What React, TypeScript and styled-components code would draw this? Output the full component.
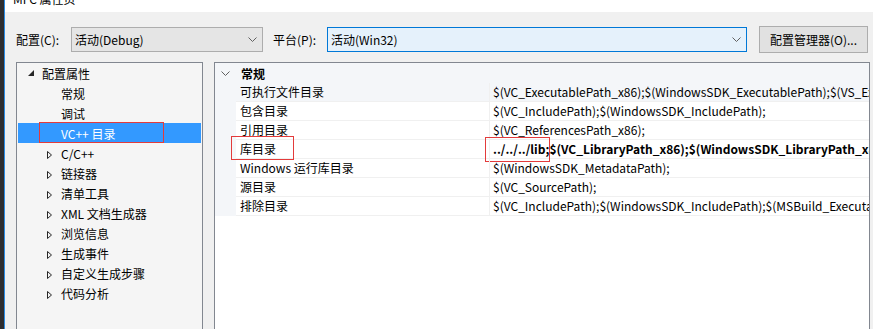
import React from 'react'
import styled, { createGlobalStyle } from 'styled-components'

type TreeItem = {
  label: string
  level: number
  arrow?: 'open' | 'closed'
  selected?: boolean
  marked?: boolean
}

const tree: TreeItem[] = [
  { label: '配置属性', level: 0, arrow: 'open' },
  { label: '常规', level: 1 },
  { label: '调试', level: 1 },
  { label: 'VC++ 目录', level: 1, selected: true, marked: true },
  { label: 'C/C++', level: 1, arrow: 'closed' },
  { label: '链接器', level: 1, arrow: 'closed' },
  { label: '清单工具', level: 1, arrow: 'closed' },
  { label: 'XML 文档生成器', level: 1, arrow: 'closed' },
  { label: '浏览信息', level: 1, arrow: 'closed' },
  { label: '生成事件', level: 1, arrow: 'closed' },
  { label: '自定义生成步骤', level: 1, arrow: 'closed' },
  { label: '代码分析', level: 1, arrow: 'closed' }
]

type Prop = {
  name: string
  value: string
  bold?: boolean
  focused?: boolean
  marked?: boolean
}

const props: Prop[] = [
  {
    name: '可执行文件目录',
    value: '$(VC_ExecutablePath_x86);$(WindowsSDK_ExecutablePath);$(VS_ExecutablePath);$(MSBuild_ExecutablePath);$(SystemRoot)\\SysWow64;$(FxCopDir);$(PATH);',
    focused: true
  },
  { name: '包含目录', value: '$(VC_IncludePath);$(WindowsSDK_IncludePath);' },
  { name: '引用目录', value: '$(VC_ReferencesPath_x86);' },
  {
    name: '库目录',
    value: '../../../lib;$(VC_LibraryPath_x86);$(WindowsSDK_LibraryPath_x86);$(NETFXKitsDir)Lib\\um\\x86',
    bold: true,
    marked: true
  },
  { name: 'Windows 运行库目录', value: '$(WindowsSDK_MetadataPath);' },
  { name: '源目录', value: '$(VC_SourcePath);' },
  {
    name: '排除目录',
    value: '$(VC_IncludePath);$(WindowsSDK_IncludePath);$(MSBuild_ExecutablePath);$(VC_LibraryPath_x86);'
  }
]

const Chevron = () => (
  <svg width="9" height="5" viewBox="0 0 9 5">
    <polyline points="0.5,0.5 4.5,4.5 8.5,0.5" fill="none" stroke="#606060" strokeWidth="1" />
  </svg>
)

const TreeArrow = ({ kind }: { kind?: 'open' | 'closed' }) => (
  <ArrowBox>
    {kind === 'open' && (
      <svg width="15" height="20" viewBox="0 0 15 20">
        <polygon points="7,7 7,13 1,13" fill="#262626" />
      </svg>
    )}
    {kind === 'closed' && (
      <svg width="15" height="20" viewBox="0 0 15 20">
        <polygon points="1.5,8.5 1.5,15.5 5.5,12" fill="none" stroke="#262626" strokeWidth="1" />
      </svg>
    )}
  </ArrowBox>
)

const App = () => {
  return (
    <Screen>
      <GlobalStyle />
      <IdeStrip />
      <Dialog>
        <TitleBar>
          <TitleText>MFC 属性页</TitleText>
        </TitleBar>
        <Body>
          <Toolbar>
            <FieldLabel $width={55}>配置(C):</FieldLabel>
            <Combo $width={192}>
              <span>活动(Debug)</span>
              <Chevron />
            </Combo>
            <FieldLabel $width={54} $gap={10}>
              平台(P):
            </FieldLabel>
            <Combo $width={420} $focused>
              <span>活动(Win32)</span>
              <Chevron />
            </Combo>
            <Button>配置管理器(O)...</Button>
          </Toolbar>
          <Panels>
            <TreePanel>
              {tree.map((item, i) => (
                <TreeRow key={i} $level={item.level} $selected={item.selected}>
                  <TreeArrow kind={item.arrow} />
                  <span>{item.label}</span>
                  {item.marked && <TreeMark />}
                </TreeRow>
              ))}
            </TreePanel>
            <GridPanel>
              <GroupHeader>
                <GroupToggle>
                  <Chevron />
                </GroupToggle>
                <GroupTitle>常规</GroupTitle>
              </GroupHeader>
              {props.map((p, i) => (
                <PropRow key={i} $focused={p.focused}>
                  <Gutter />
                  <NameCell>
                    {p.name}
                    {p.marked && <NameMark />}
                  </NameCell>
                  <ValueCell $bold={p.bold}>
                    {p.value}
                    {p.marked && <ValueMark />}
                  </ValueCell>
                </PropRow>
              ))}
            </GridPanel>
          </Panels>
        </Body>
      </Dialog>
    </Screen>
  )
}

const GlobalStyle = createGlobalStyle`
  html, body {
    margin: 0;
    padding: 0;
    overflow: hidden;
  }
  body {
    font-family: "Noto Sans CJK SC", "Microsoft YaHei UI", sans-serif;
    font-size: 12px;
    color: #000;
  }
`

const Screen = styled.div`
  display: flex;
  width: 873px;
  height: 329px;
  overflow: hidden;
`

const IdeStrip = styled.div`
  width: 4px;
  flex: none;
  background: linear-gradient(#2d2d30 0, #2d2d30 100%);
  border-right: 1px solid #2a8ce6;
`

const Dialog = styled.div`
  flex: 1;
  min-width: 0;
  display: flex;
  flex-direction: column;
  background: #f0f0f0;
`

const TitleBar = styled.div`
  height: 12px;
  flex: none;
  background: #fff;
  overflow: hidden;
  padding-left: 8px;
`

const TitleText = styled.div`
  margin-top: -7px;
  line-height: 12px;
  font-size: 12px;
`

const Body = styled.div`
  flex: 1;
  display: flex;
  flex-direction: column;
  padding: 14px 0 0 11px;
  min-height: 0;
`

const Toolbar = styled.div`
  display: flex;
  align-items: center;
  height: 27px;
`

const FieldLabel = styled.span<{ $width: number; $gap?: number }>`
  width: ${p => p.$width}px;
  margin-left: ${p => p.$gap ?? 0}px;
  flex: none;
  line-height: 16px;
  white-space: nowrap;
`

const Combo = styled.div<{ $width: number; $focused?: boolean }>`
  box-sizing: border-box;
  width: ${p => p.$width}px;
  height: 25px;
  flex: none;
  display: flex;
  align-items: center;
  justify-content: space-between;
  padding: 0 5px 0 3px;
  border: 1px solid ${p => (p.$focused ? '#0078d7' : '#adadad')};
  background: ${p => (p.$focused ? '#e5f1fb' : '#e5e5e5')};
  white-space: nowrap;
`

const Button = styled.div`
  box-sizing: border-box;
  width: 109px;
  height: 27px;
  margin-left: 12px;
  flex: none;
  display: flex;
  align-items: center;
  justify-content: center;
  border: 1px solid #adadad;
  background: #e1e1e1;
  white-space: nowrap;
`

const Panels = styled.div`
  display: flex;
  gap: 11px;
  margin-top: 9px;
  height: 290px;
  flex: none;
`

const TreePanel = styled.div`
  box-sizing: border-box;
  width: 187px;
  flex: none;
  border: 1px solid #828790;
  background: #f5f5f5;
  padding-top: 0;
`

const TreeRow = styled.div<{ $level: number; $selected?: boolean }>`
  position: relative;
  display: flex;
  align-items: center;
  height: 20px;
  margin: 0 1px;
  padding-left: ${p => 9 + p.$level * 19}px;
  background: ${p => (p.$selected ? '#3399ff' : 'transparent')};
  color: ${p => (p.$selected ? '#fff' : '#000')};
  white-space: nowrap;
`

const ArrowBox = styled.span`
  width: 15px;
  height: 20px;
  flex: none;
  display: flex;
`

const Mark = styled.div`
  position: absolute;
  box-sizing: border-box;
  border: 1px solid #e33b3b;
  pointer-events: none;
`

const TreeMark = styled(Mark)`
  left: 21px;
  top: -1px;
  width: 125px;
  height: 21px;
`

const NameMark = styled(Mark)`
  left: -5px;
  top: -4px;
  width: 63px;
  height: 24px;
`

const ValueMark = styled(Mark)`
  left: -5px;
  top: -3px;
  width: 65px;
  height: 25px;
`

const GridPanel = styled.div`
  box-sizing: border-box;
  width: 656px;
  flex: none;
  border: 1px solid #828790;
  background: #fff;
`

const GroupHeader = styled.div`
  display: flex;
  align-items: center;
  height: 20px;
  background: #f4f6f9;
`

const GroupToggle = styled.span`
  width: 21px;
  display: flex;
  justify-content: center;
  padding-top: 1px;
`

const GroupTitle = styled.span`
  padding-left: 5px;
  font-weight: 700;
`

const PropRow = styled.div<{ $focused?: boolean }>`
  display: grid;
  grid-template-columns: 21px 253px 1fr;
  height: 19px;
  background: ${p => (p.$focused ? '#f4f6f9' : '#fff')};
`

const Gutter = styled.div`
  background: #f4f6f9;
`

const NameCell = styled.div`
  position: relative;
  box-sizing: border-box;
  padding-left: 4px;
  line-height: 18px;
  border-bottom: 1px solid #f0f0f0;
  white-space: nowrap;
`

const ValueCell = styled.div<{ $bold?: boolean }>`
  position: relative;
  box-sizing: border-box;
  min-width: 0;
  padding-left: 3px;
  line-height: 18px;
  border-bottom: 1px solid #f0f0f0;
  border-left: 1px solid #f0f0f0;
  font-weight: ${p => (p.$bold ? 700 : 400)};
  white-space: nowrap;
  overflow: visible;
  clip-path: inset(-6px 0 -6px -8px);
`

export default App
